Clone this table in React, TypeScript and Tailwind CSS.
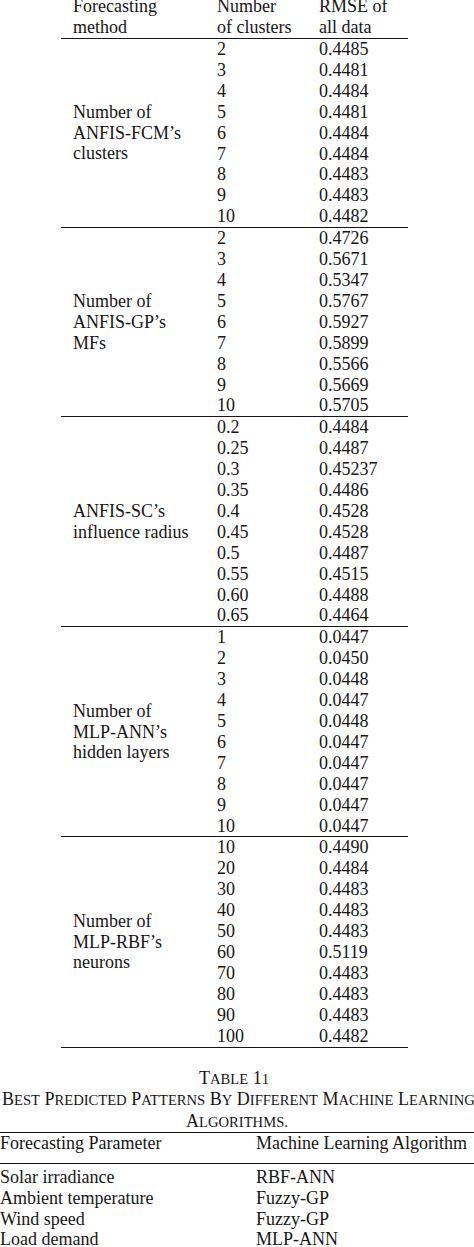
import React from "react";

type Group = { label: string[]; rows: [string, string][] };

const groups: Group[] = [
  {
    label: ["Number of", "ANFIS-FCM’s", "clusters"],
    rows: [
      ["2", "0.4485"],
      ["3", "0.4481"],
      ["4", "0.4484"],
      ["5", "0.4481"],
      ["6", "0.4484"],
      ["7", "0.4484"],
      ["8", "0.4483"],
      ["9", "0.4483"],
      ["10", "0.4482"],
    ],
  },
  {
    label: ["Number of", "ANFIS-GP’s", "MFs"],
    rows: [
      ["2", "0.4726"],
      ["3", "0.5671"],
      ["4", "0.5347"],
      ["5", "0.5767"],
      ["6", "0.5927"],
      ["7", "0.5899"],
      ["8", "0.5566"],
      ["9", "0.5669"],
      ["10", "0.5705"],
    ],
  },
  {
    label: ["ANFIS-SC’s", "influence radius"],
    rows: [
      ["0.2", "0.4484"],
      ["0.25", "0.4487"],
      ["0.3", "0.45237"],
      ["0.35", "0.4486"],
      ["0.4", "0.4528"],
      ["0.45", "0.4528"],
      ["0.5", "0.4487"],
      ["0.55", "0.4515"],
      ["0.60", "0.4488"],
      ["0.65", "0.4464"],
    ],
  },
  {
    label: ["Number of", "MLP-ANN’s", "hidden layers"],
    rows: [
      ["1", "0.0447"],
      ["2", "0.0450"],
      ["3", "0.0448"],
      ["4", "0.0447"],
      ["5", "0.0448"],
      ["6", "0.0447"],
      ["7", "0.0447"],
      ["8", "0.0447"],
      ["9", "0.0447"],
      ["10", "0.0447"],
    ],
  },
  {
    label: ["Number of", "MLP-RBF’s", "neurons"],
    rows: [
      ["10", "0.4490"],
      ["20", "0.4484"],
      ["30", "0.4483"],
      ["40", "0.4483"],
      ["50", "0.4483"],
      ["60", "0.5119"],
      ["70", "0.4483"],
      ["80", "0.4483"],
      ["90", "0.4483"],
      ["100", "0.4482"],
    ],
  },
];

const best: [string, string][] = [
  ["Solar irradiance", "RBF-ANN"],
  ["Ambient temperature", "Fuzzy-GP"],
  ["Wind speed", "Fuzzy-GP"],
  ["Load demand", "MLP-ANN"],
];

// small caps done by hand: first letter full size, rest smaller capitals
function SmallCaps({ text }: { text: string }) {
  return (
    <>
      {text.split(" ").map((w, i) => (
        <React.Fragment key={i}>
          {i > 0 && " "}
          <span>{w[0]}</span>
          <span className="text-[14.6px] uppercase">{w.slice(1)}</span>
        </React.Fragment>
      ))}
    </>
  );
}

export default function App() {
  return (
    <div className="w-[474px] h-[1247px] overflow-hidden bg-white text-[#161616] font-['Liberation_Serif','Times_New_Roman',serif] text-[18px] leading-[21px]">
      {/* Table 10 (continued) */}
      <div className="ml-[61px] w-[347px] -mt-[4px]">
        <div className="flex">
          <div className="w-[156px] pl-[12px]">
            <div>Forecasting</div>
            <div>method</div>
          </div>
          <div className="w-[102px]">
            <div>Number</div>
            <div>of clusters</div>
          </div>
          <div className="flex-1">
            <div>RMSE of</div>
            <div>all data</div>
          </div>
        </div>
        {groups.map((g, i) => (
          <div key={i} className="flex border-t-[1.5px] border-[#161616]">
            <div className="w-[156px] pl-[12px] flex flex-col justify-center leading-[20.6px]">
              {g.label.map((l) => (
                <div key={l} className="whitespace-nowrap">
                  {l}
                </div>
              ))}
            </div>
            <div className="flex-1">
              {g.rows.map(([a, b]) => (
                <div key={a} className="flex h-[20.92px]">
                  <div className="w-[102px]">{a}</div>
                  <div className="flex-1">{b}</div>
                </div>
              ))}
            </div>
          </div>
        ))}
        <div className="border-t-[1.5px] border-[#161616]" />
      </div>

      {/* Table 11 */}
      <div className="mt-[20px] leading-[20.6px] text-center">
        <div className="pr-[6px]">
          <SmallCaps text="Table 11" />
        </div>
        <div className="whitespace-nowrap text-left pl-[2px]">
          <SmallCaps text="Best Predicted Patterns By Different Machine Learning" />
        </div>
        <div>
          <SmallCaps text="Algorithms." />
        </div>
      </div>
      <div className="border-t-[1.5px] border-[#161616] flex pb-[9px]">
        <div className="w-[256px]">Forecasting Parameter</div>
        <div className="flex-1 whitespace-nowrap">Machine Learning Algorithm</div>
      </div>
      <div className="border-t-[1.5px] border-[#161616] pt-[3px]">
        {best.map(([a, b]) => (
          <div key={a} className="flex h-[20.7px]">
            <div className="w-[256px]">{a}</div>
            <div className="flex-1">{b}</div>
          </div>
        ))}
      </div>
    </div>
  );
}
